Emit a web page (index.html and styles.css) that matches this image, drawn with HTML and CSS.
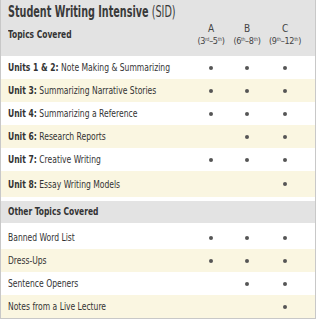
FILE: index.html
```html
<!DOCTYPE html>
<html>
<head>
<meta charset="utf-8">
<link rel="stylesheet" href="styles.css">
</head>
<body>
<div class="tbl">
  <div class="head">
    <div class="title"><span class="t"><b>Student Writing Intensive</b> (SID)</span></div>
    <div class="row hrow">
      <div class="label topics"><span class="t">Topics Covered</span></div>
      <div class="col"><span>A</span><span>(3<sup>rd</sup>–5<sup>th</sup>)</span></div>
      <div class="col"><span>B</span><span>(6<sup>th</sup>–8<sup>th</sup>)</span></div>
      <div class="col"><span>C</span><span>(9<sup>th</sup>–12<sup>th</sup>)</span></div>
    </div>
  </div>
  <div class="row"><div class="label"><span class="t"><b>Units 1 &amp; 2:</b> Note Making &amp; Summarizing</span></div><div class="c"><i class="dot"></i></div><div class="c"><i class="dot"></i></div><div class="c"><i class="dot"></i></div></div>
  <div class="row alt"><div class="label"><span class="t"><b>Unit 3:</b> Summarizing Narrative Stories</span></div><div class="c"><i class="dot"></i></div><div class="c"><i class="dot"></i></div><div class="c"><i class="dot"></i></div></div>
  <div class="row"><div class="label"><span class="t"><b>Unit 4:</b> Summarizing a Reference</span></div><div class="c"><i class="dot"></i></div><div class="c"><i class="dot"></i></div><div class="c"><i class="dot"></i></div></div>
  <div class="row alt"><div class="label"><span class="t"><b>Unit 6:</b> Research Reports</span></div><div class="c"></div><div class="c"><i class="dot"></i></div><div class="c"><i class="dot"></i></div></div>
  <div class="row"><div class="label"><span class="t"><b>Unit 7:</b> Creative Writing</span></div><div class="c"><i class="dot"></i></div><div class="c"><i class="dot"></i></div><div class="c"><i class="dot"></i></div></div>
  <div class="row alt tall"><div class="label"><span class="t"><b>Unit 8:</b> Essay Writing Models</span></div><div class="c"></div><div class="c"></div><div class="c"><i class="dot"></i></div></div>
  <div class="sub"><span class="t">Other Topics Covered</span></div>
  <div class="row first"><div class="label"><span class="t">Banned Word List</span></div><div class="c"><i class="dot"></i></div><div class="c"><i class="dot"></i></div><div class="c"><i class="dot"></i></div></div>
  <div class="row alt"><div class="label"><span class="t">Dress-Ups</span></div><div class="c"><i class="dot"></i></div><div class="c"><i class="dot"></i></div><div class="c"><i class="dot"></i></div></div>
  <div class="row"><div class="label"><span class="t">Sentence Openers</span></div><div class="c"></div><div class="c"><i class="dot"></i></div><div class="c"><i class="dot"></i></div></div>
  <div class="row alt"><div class="label"><span class="t">Notes from a Live Lecture</span></div><div class="c"></div><div class="c"></div><div class="c"><i class="dot"></i></div></div>
</div>
</body>
</html>
```
FILE: styles.css
```css
html, body { margin: 0; padding: 0; background: #fff; }
body {
  font-family: "DejaVu Sans Condensed", "DejaVu Sans", sans-serif;
  color: #333;
}
.tbl {
  width: 316px;
  height: 319px;
  box-sizing: border-box;
  border: 1px solid #c8c8c8;
  border-top: 0;
  overflow: hidden;
}
.t {
  display: inline-block;
  transform: scaleX(0.77);
  transform-origin: 0 50%;
  white-space: nowrap;
}
.head {
  background: #e3e3e3;
  height: 56px;
  padding-top: 3px;
  box-sizing: border-box;
}
.title {
  font-size: 16px;
  padding-left: 7px;
  height: 18px;
  line-height: 18px;
  color: #3a3a3a;
}
.title .t { transform: scaleX(0.67); }
.title b { font-weight: bold; }
.row {
  display: grid;
  grid-template-columns: minmax(0, 1fr) 36px 36px 40px;
  padding-right: 10px;
  height: 23px;
  align-items: center;
}
.row.alt { background: #faf6e1; }
.row.tall { height: 26px; }
.row.first { height: 26px; padding-top: 3px; box-sizing: border-box; }
.label {
  padding-left: 7px;
  font-size: 11px;
  white-space: nowrap;
  overflow: hidden;
}
.label b { font-weight: bold; }
.hrow { height: 35px; align-items: start; }
.topics { font-weight: bold; padding-top: 7px; font-size: 11px; }
.topics .t, .sub .t { transform: scaleX(0.76); }
.col {
  display: flex;
  flex-direction: column;
  align-items: center;
  font-size: 9px;
  line-height: 12px;
  color: #444;
  white-space: nowrap;
  padding-top: 2px;
  letter-spacing: -0.3px;
}
.col span:first-child { font-size: 10px; line-height: 12px; }
.col sup { font-size: 5px; vertical-align: 3px; line-height: 0; }
.c { display: flex; justify-content: center; align-items: center; }
.dot {
  display: block;
  width: 4px;
  height: 4px;
  border-radius: 50%;
  background: #555;
}
.sub {
  margin-top: 4px;
  background: #e3e3e3;
  height: 22px;
  line-height: 22px;
  padding-left: 7px;
  font-size: 11px;
  font-weight: bold;
}
```
